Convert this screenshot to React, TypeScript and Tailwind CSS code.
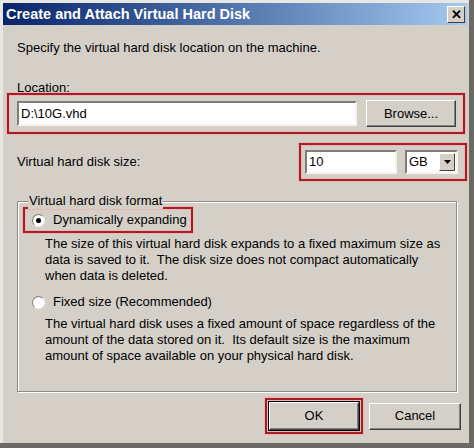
import React from 'react';

const font = { fontFamily: '"Liberation Sans", Arial, sans-serif' };

function RedBox({ className, children }: { className: string; children?: React.ReactNode }) {
  return (
    <div className={`border-2 border-[#a51e26] shadow-[0_0_0_1px_#e7b7b5,inset_0_0_0_1px_#e7b7b5] ${className}`}>
      {children}
    </div>
  );
}

function Radio({ checked }: { checked?: boolean }) {
  return (
    <span className="w-[13px] h-[13px] rounded-full bg-white border border-t-[#7e7c78] border-l-[#7e7c78] border-b-[#f2f1ef] border-r-[#f2f1ef] flex items-center justify-center">
      {checked && <span className="w-[5px] h-[5px] rounded-full bg-black" />}
    </span>
  );
}

function Button({ label, className }: { label: string; className: string }) {
  return (
    <button className={`bg-[#d4d0c8] border border-t-white border-l-white border-b-[#404040] border-r-[#404040] shadow-[inset_-1px_-1px_0_#808080] text-[13px] text-black ${className}`}>
      {label}
    </button>
  );
}

const field =
  'bg-white border-2 border-t-[#7f7d79] border-l-[#7f7d79] border-b-[#f4f3f1] border-r-[#f4f3f1] flex items-center text-[13px] text-black';

export default function App() {
  return (
    <div className="w-[474px] h-[448px] bg-[#6b6966] flex" style={font}>
      <div className="w-[469px] h-[443px] bg-[#d4d0c8] border-t-[3px] border-l-[3px] border-[#e9e7e3] flex flex-col">
        {/* title bar */}
        <div className="h-[22px] w-[464px] bg-linear-to-r from-[#0a246a] to-[#a6caf0] flex items-center justify-between pl-[3px] pr-[2px]">
          <span className="text-white font-bold text-[14.5px] leading-none">Create and Attach Virtual Hard Disk</span>
          <span className="w-[18px] h-[17px] bg-[#d4d0c8] border border-t-white border-l-white border-b-[#404040] border-r-[#404040] flex items-center justify-center text-[13px] font-bold leading-none text-black">
            ✕
          </span>
        </div>

        <p className="mt-[15px] ml-[14px] text-[13px] leading-[16px] text-black">
          Specify the virtual hard disk location on the machine.
        </p>

        <p className="mt-[24px] ml-[14px] text-[13px] leading-[16px] text-black">Location:</p>

        <RedBox className="mt-[-3px] ml-[4px] w-[458px] h-[41px] flex items-center pl-[8px] pr-[6px] gap-[9px]">
          <div className={`${field} w-[340px] h-[25px] pl-[2px]`}>D:\10G.vhd</div>
          <Button label="Browse..." className="w-[90px] h-[27px]" />
        </RedBox>

        <div className="mt-[9px] flex items-center">
          <span className="ml-[14px] text-[13px] leading-[16px] text-black flex-1">Virtual hard disk size:</span>
          <RedBox className="mr-[2px] w-[168px] h-[38px] flex items-center pl-[4px] gap-[8px]">
            <div className={`${field} w-[92px] h-[24px] pl-[2px]`}>10</div>
            <div className={`${field} w-[53px] h-[24px] pl-[2px] justify-between pr-[1px]`}>
              <span>GB</span>
              <span className="w-[16px] h-[18px] bg-[#d4d0c8] border border-t-white border-l-white border-b-[#404040] border-r-[#404040] flex items-center justify-center">
                <svg width="7" height="4" viewBox="0 0 7 4">
                  <path d="M0 0h7L3.5 4z" fill="#000" />
                </svg>
              </span>
            </div>
          </RedBox>
        </div>

        {/* group box */}
        <div className="mt-[20px] ml-[14px] w-[440px] h-[191px] border border-[#8d8b87] shadow-[inset_1px_1px_0_#fff,1px_1px_0_#fff] relative flex flex-col">
          <span className="absolute left-[10px] top-[-9px] bg-[#d4d0c8] px-[1px] text-[13px] leading-[16px] text-black">
            Virtual hard disk format
          </span>
          <RedBox className="mt-[5px] ml-[5px] w-[170px] h-[26px] flex items-center gap-[8px] pl-[7px]">
            <Radio checked />
            <span className="text-[13px] text-black">Dynamically expanding</span>
          </RedBox>
          <p className="mt-[3px] ml-[27px] mr-[12px] text-[13px] leading-[16px] text-black">
            The size of this virtual hard disk expands to a fixed maximum size as data is saved to it.&nbsp; The disk size does not compact automatically when data is deleted.
          </p>
          <div className="mt-[8px] ml-[14px] h-[20px] flex items-center gap-[8px]">
            <Radio />
            <span className="text-[13px] text-black">Fixed size (Recommended)</span>
          </div>
          <p className="mt-[4px] ml-[27px] mr-[12px] text-[13px] leading-[16px] text-black">
            The virtual hard disk uses a fixed amount of space regardless of the amount of the data stored on it.&nbsp; Its default size is the maximum amount of space available on your physical hard disk.
          </p>
        </div>

        <div className="mt-[6px] flex items-center justify-end pr-[8px] gap-[6px]">
          <RedBox className="w-[98px] h-[36px] flex items-center justify-center">
            <Button label="OK" className="w-[90px] h-[28px] outline outline-1 outline-black" />
          </RedBox>
          <Button label="Cancel" className="w-[92px] h-[27px]" />
        </div>
      </div>
    </div>
  );
}
